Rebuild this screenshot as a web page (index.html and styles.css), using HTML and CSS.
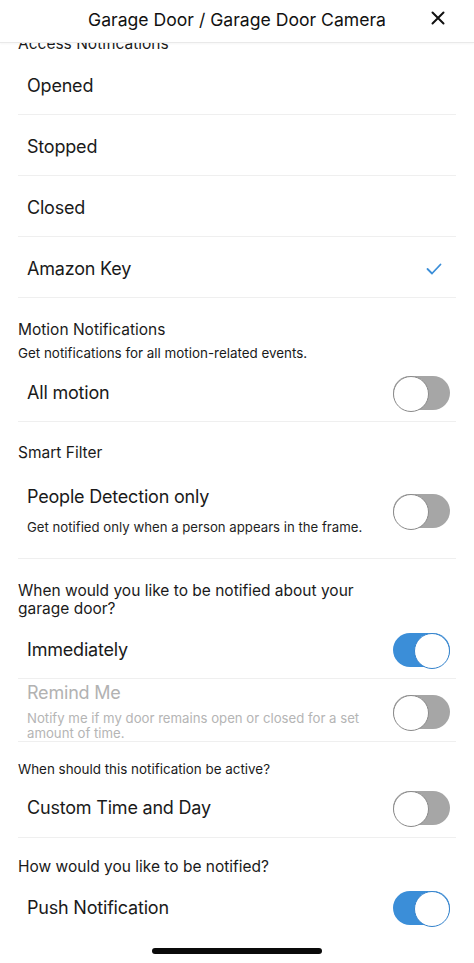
FILE: index.html
```html
<!DOCTYPE html>
<html lang="en">
<head>
<meta charset="utf-8">
<title>Garage Door / Garage Door Camera</title>
<link rel="stylesheet" href="styles.css">
</head>
<body>
<header class="topbar">
  <div class="topbar-title">Garage Door / Garage Door Camera</div>
  <button class="close" aria-label="Close">
    <svg width="14" height="14" viewBox="0 0 14 14"><path d="M1.5 1.5 L12.5 12.5 M12.5 1.5 L1.5 12.5" stroke="#111" stroke-width="2" stroke-linecap="round" fill="none"/></svg>
  </button>
</header>

<main class="content">
  <h2 class="sec sec-first">Access Notifications</h2>
  <ul class="list">
    <li class="row"><span class="label">Opened</span></li>
    <li class="row"><span class="label">Stopped</span></li>
    <li class="row"><span class="label">Closed</span></li>
    <li class="row"><span class="label">Amazon Key</span>
      <svg class="check" width="16" height="12" viewBox="0 0 16 12"><path d="M1.5 6 L6 10.5 L14.5 1.5" stroke="#3b8ed8" stroke-width="1.8" fill="none" stroke-linecap="round" stroke-linejoin="round"/></svg>
    </li>
  </ul>

  <h2 class="sec sec-motion">Motion Notifications</h2>
  <p class="note">Get notifications for all motion-related events.</p>
  <ul class="list">
    <li class="row row-short"><span class="label">All motion</span><span class="toggle"></span></li>
  </ul>

  <h2 class="sec sec-smart">Smart Filter</h2>
  <ul class="list">
    <li class="row row-tall">
      <div class="text">
        <span class="label">People Detection only</span>
        <span class="sub">Get notified only when a person appears in the frame.</span>
      </div>
      <span class="toggle"></span>
    </li>
  </ul>

  <h2 class="sec sec-when">When would you like to be notified about your garage door?</h2>
  <ul class="list">
    <li class="row"><span class="label">Immediately</span><span class="toggle on"></span></li>
    <li class="row row-remind">
      <div class="text">
        <span class="label disabled">Remind Me</span>
        <span class="sub sub-disabled">Notify me if my door remains open or closed for a set amount of time.</span>
      </div>
      <span class="toggle"></span>
    </li>
  </ul>

  <p class="note note-active">When should this notification be active?</p>
  <ul class="list">
    <li class="row row-custom"><span class="label">Custom Time and Day</span><span class="toggle"></span></li>
  </ul>

  <h2 class="sec sec-how">How would you like to be notified?</h2>
  <ul class="list">
    <li class="row row-last"><span class="label">Push Notification</span><span class="toggle on"></span></li>
  </ul>
</main>

<div class="home-indicator"></div>
</body>
</html>
```

FILE: styles.css
```css
* { box-sizing: border-box; }

html, body {
  margin: 0;
  padding: 0;
  background: #ffffff;
}

body {
  width: 474px;
  height: 963px;
  overflow: hidden;
  font-family: Inter, "Noto Sans", "Liberation Sans", sans-serif;
  color: #1c1c1e;
  position: relative;
}

.topbar {
  position: absolute;
  top: 0;
  left: 0;
  right: 0;
  height: 43px;
  background: #fff;
  border-bottom: 1px solid #e9e9e9;
  box-shadow: 0 1px 2px rgba(0,0,0,0.04);
  display: flex;
  align-items: center;
  justify-content: center;
  z-index: 2;
}

.topbar-title {
  font-size: 17.6px;
  color: #111;
  margin-top: -4px;
}

.close {
  position: absolute;
  right: 29px;
  top: 11px;
  border: 0;
  background: none;
  padding: 0;
  width: 14px;
  height: 14px;
  display: flex;
}

.content {
  padding: 0 18px;
}

.sec {
  margin: 0;
  font-weight: 400;
  font-size: 15.5px;
  line-height: 20px;
  color: #1a1a1a;
}

.sec-first { padding-top: 34px; }
.sec-motion { padding-top: 22px; }
.sec-smart { padding-top: 21px; }
.sec-when { padding-top: 23px; line-height: 18px; padding-right: 70px; }
.sec-how { padding-top: 19px; }

.note {
  margin: 0;
  font-size: 13.4px;
  line-height: 18px;
  color: #1a1a1a;
}

.sec-motion + .note { margin-top: 4px; }
.note-active { padding-top: 18px; }

.list {
  list-style: none;
  margin: 0;
  padding: 0;
}

.row {
  display: flex;
  align-items: center;
  justify-content: space-between;
  height: 61px;
  padding: 3px 6px 0 9px;
  border-bottom: 1px solid #efefef;
  gap: 24px;
}

.row-short { height: 60px; }
.row-custom { height: 60px; padding-top: 1px; }
.row-last { border-bottom: 0; padding-top: 0; }

.row-tall {
  height: auto;
  padding-top: 22px;
  padding-bottom: 22px;
}

.row-remind {
  height: auto;
  padding-top: 3px;
  padding-bottom: 0;
}

.label {
  font-size: 18px;
  line-height: 24px;
  color: #1a1a1a;
  letter-spacing: -0.2px;
}

.label.disabled { color: #b2b2b2; line-height: 22px; }

.text {
  display: flex;
  flex-direction: column;
  flex: 1;
  min-width: 0;
}

.row-tall .text { gap: 9px; }
.row-remind .text { gap: 7px; }

.sub {
  font-size: 13.2px;
  line-height: 18px;
  color: #1f1f1f;
}

.sub-disabled {
  color: #b5b5b5;
  line-height: 15px;
}

.check { margin-right: 8px; }

.toggle {
  flex: none;
  position: relative;
  width: 57px;
  height: 34px;
  border-radius: 17px;
  background: #a6a6a6;
}

.toggle::after {
  content: "";
  position: absolute;
  top: 0;
  left: 0;
  width: 34px;
  height: 34px;
  border-radius: 50%;
  background: #fff;
  border: 1.5px solid #8a8a8a;
}

.toggle.on { background: #3b8ed8; }

.toggle.on::after {
  left: auto;
  right: 0;
  border-color: #3583cc;
}

.home-indicator {
  position: absolute;
  left: 152px;
  top: 948px;
  width: 170px;
  height: 6px;
  border-radius: 3px;
  background: #0a0a0a;
}
```
